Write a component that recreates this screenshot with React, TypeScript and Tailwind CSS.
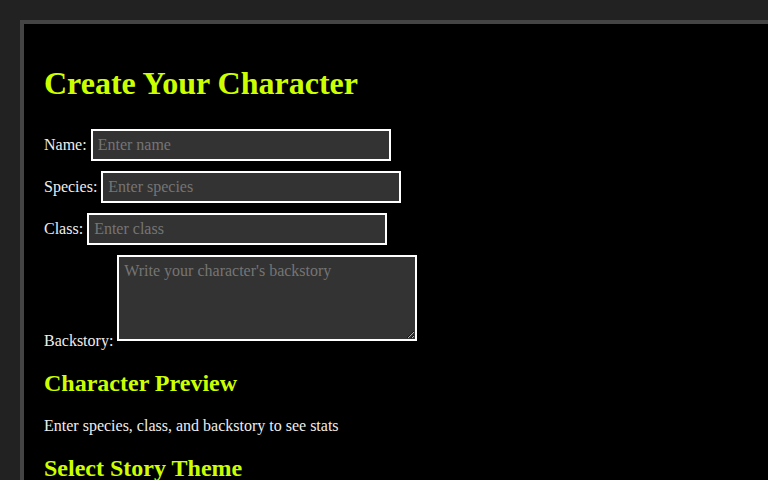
import React, { useState } from 'react';

// Character creator: basic info form plus a live preview section.
export default function App() {
  const [name, setName] = useState('');
  const [species, setSpecies] = useState('');
  const [charClass, setCharClass] = useState('');
  const [backstory, setBackstory] = useState('');

  const ready = species && charClass && backstory;

  const fieldCls =
    'w-[300px] my-[5px] p-[5px] bg-[#333] border-2 border-white text-[#eee] placeholder-[#757575] outline-none leading-[normal] align-baseline';

  return (
    <div className="h-screen w-screen overflow-hidden bg-[#222] p-5 font-['Liberation_Serif',serif] text-[16px] leading-[normal] text-[#eee]">
      <div className="w-[900px] min-h-[600px] border-4 border-[#444] bg-black p-5">
        <h1 className="my-[21.44px] text-[32px] font-bold leading-[normal] text-[#ccff00]">
          Create Your Character
        </h1>

        {/* Form */}
        <div>
          <div>
            <label>Name:</label>{' '}
            <input
              className={`${fieldCls} h-[32px]`}
              placeholder="Enter name"
              value={name}
              onChange={(e) => setName(e.target.value)}
            />
          </div>
          <div>
            <label>Species:</label>{' '}
            <input
              className={`${fieldCls} h-[32px]`}
              placeholder="Enter species"
              value={species}
              onChange={(e) => setSpecies(e.target.value)}
            />
          </div>
          <div>
            <label>Class:</label>{' '}
            <input
              className={`${fieldCls} h-[32px]`}
              placeholder="Enter class"
              value={charClass}
              onChange={(e) => setCharClass(e.target.value)}
            />
          </div>
          <div>
            <label>Backstory:</label>{' '}
            <textarea
              className={`${fieldCls} h-[86px]`}
              placeholder="Write your character's backstory"
              value={backstory}
              onChange={(e) => setBackstory(e.target.value)}
            />
          </div>
        </div>

        {/* Preview */}
        <h2 className="my-[19.92px] text-[24px] font-bold leading-[normal] text-[#ccff00]">
          Character Preview
        </h2>
        <p className="my-4">
          {ready
            ? `${name || 'Unnamed'} the ${species} ${charClass}`
            : 'Enter species, class, and backstory to see stats'}
        </p>

        <h2 className="my-[19.92px] text-[24px] font-bold leading-[normal] text-[#ccff00]">
          Select Story Theme
        </h2>
      </div>
    </div>
  );
}
